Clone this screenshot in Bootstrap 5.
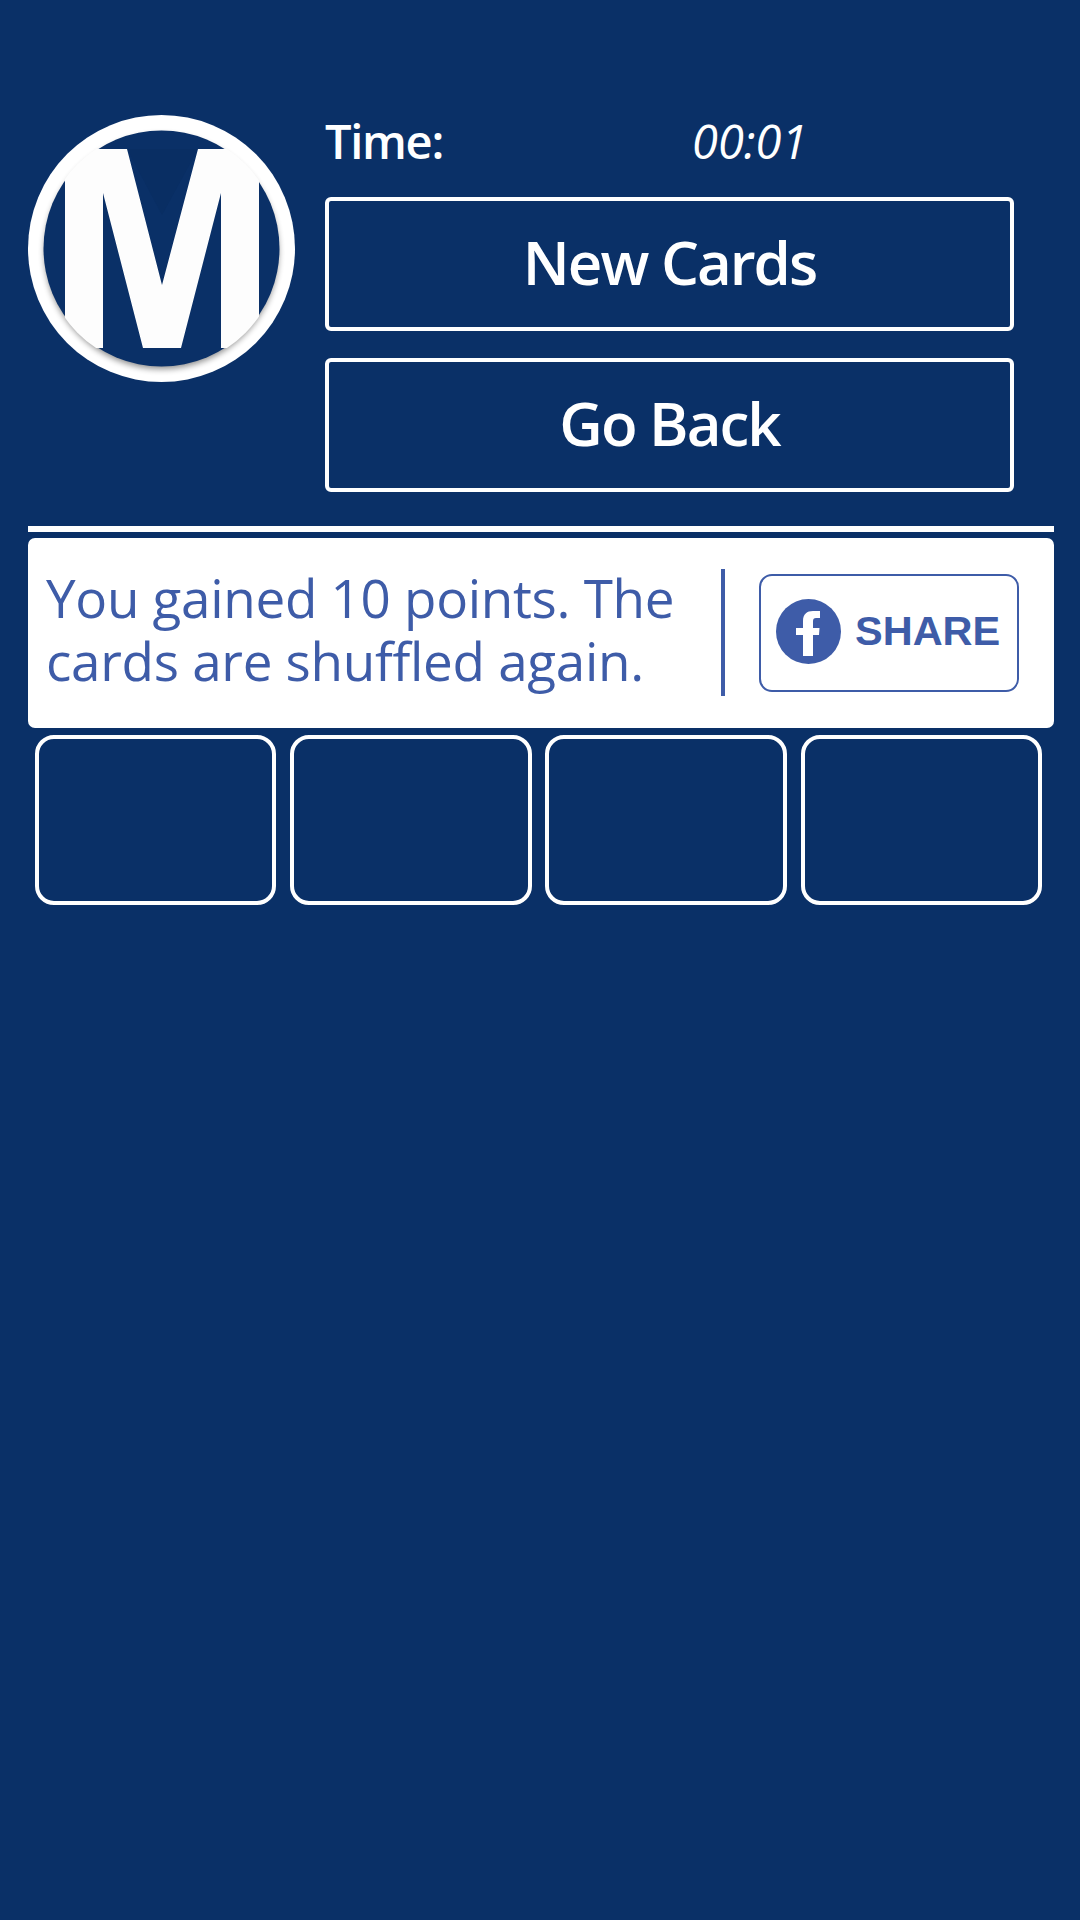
<!DOCTYPE html>
<html lang="en">
<head>
    <meta charset="UTF-8">
    <meta name="viewport" content="width=device-width, initial-scale=1.0">
    <title>Memory Cards</title>
    <link href="https://cdn.jsdelivr.net/npm/bootstrap@5.3.3/dist/css/bootstrap.min.css" rel="stylesheet">
    <style>
        body { background: #0a3067; font-family: "Open Sans", "Noto Sans", sans-serif; color: #fff; min-height: 1920px; }
        .game-page { padding: 115px 26px 0 28px; }
        .game-logo { width: 267px; height: 267px; flex: none; display: block; }
        .game-side { width: 689px; margin-left: 30px; padding-top: 1px; }
        .time-row { height: 81px; font-size: 47px; line-height: 47px; font-weight: 600; letter-spacing: -1.300px; padding-top: 2px; }
        .time-label { width: 367px; }
        .time-value { font-weight: 400; font-style: italic; letter-spacing: 0; }
        .game-btn { display: block; width: 100%; height: 134px; border: 4px solid #fff; border-radius: 6px; background: transparent; color: #fff; font-size: 60px; font-weight: 600; letter-spacing: -2px; line-height: 1; padding: 0 0 4px; }
        .game-btn:hover { background: transparent; color: #fff; border-color: #fff; }
        .game-btn + .game-btn { margin-top: 27px; }
        .game-rule { height: 6px; background: #fff; margin-top: 34px; margin-bottom: 6px; opacity: 1; border: 0; }
        .msg-box { height: 190px; border-radius: 7px; background: #fff; color: #3e5ca8; padding: 0 35px 8px 18px; }
        .msg-text { width: 675px; font-size: 53px; line-height: 63px; letter-spacing: -0.300px; }
        .msg-sep { width: 4px; height: 127px; background: #3e5ca8; flex: none; margin-top: 6px; }
        .share-box { width: 260px; height: 118px; flex: none; margin-left: 34px; margin-top: 8px; border: 2px solid #3e5ca8; border-radius: 13px; padding-left: 15px; gap: 14px; padding-bottom: 4px; }
        .share-icon { width: 65px; height: 65px; flex: none; display: block; }
        .share-word { font-family: "Liberation Sans", Arial, sans-serif; font-weight: 700; font-size: 41.500px; line-height: 1; }
        .tile-row { gap: 13.800px; padding: 7px 0 0 7px; }
        .tile-box { width: 241.400px; height: 170px; border: 4px solid #fff; border-radius: 19px; }
    </style>
</head>
<body class="m-0">
<div class="game-page">
    <!-- 上方：標誌、時間、按鈕 -->
    <div class="d-flex">
        <svg class="game-logo" viewBox="0 0 267 267">
            <defs>
                <clipPath id="outerClip"><circle cx="133.5" cy="133.5" r="133.5"/></clipPath>
                <clipPath id="innerClip"><circle cx="133.5" cy="133.5" r="119"/></clipPath>
                <filter id="ringBlur" x="-20%" y="-20%" width="140%" height="140%"><feGaussianBlur stdDeviation="3"/></filter>
            </defs>
            <circle cx="133.5" cy="133.5" r="133.5" fill="#fff"/>
            <g clip-path="url(#outerClip)">
                <circle cx="133.5" cy="137" r="117" fill="#000" opacity=".45" filter="url(#ringBlur)"/>
            </g>
            <circle cx="133.5" cy="133.5" r="118" fill="#0a3067"/>
            <g clip-path="url(#innerClip)">
                <path d="M99 34L134 100L170 34Z" fill="#082c60" opacity=".5"/>
                <path d="M37 34H99L134 170L170 34H231V233H193V78L153 233H115L75 78V233H37Z" fill="#fdfdfd"/>
            </g>
        </svg>
        <div class="game-side">
            <div class="time-row d-flex">
                <div class="time-label">Time:</div>
                <div class="time-value">00:01</div>
            </div>
            <button type="button" class="btn game-btn">New Cards</button>
            <button type="button" class="btn game-btn">Go Back</button>
        </div>
    </div>

    <hr class="game-rule">

    <!-- 訊息 -->
    <div class="msg-box d-flex align-items-center">
        <div class="msg-text">You gained 10 points. The cards are shuffled again.</div>
        <div class="msg-sep"></div>
        <div class="share-box d-flex align-items-center">
            <svg class="share-icon" viewBox="0 0 65 65">
                <circle cx="32.5" cy="32.5" r="32.5" fill="#3e5ca8"/>
                <path d="M27 57V36H20V29H27V22C27 15 31 12 37 12H44V19H40C38 19 37 20 37 22V29H43.500L43 36H37V57Z" fill="#fff"/>
            </svg>
            <span class="share-word">SHARE</span>
        </div>
    </div>

    <!-- 卡片 -->
    <div class="tile-row d-flex">
        <div class="tile-box"></div>
        <div class="tile-box"></div>
        <div class="tile-box"></div>
        <div class="tile-box"></div>
    </div>
</div>
<script src="https://cdn.jsdelivr.net/npm/bootstrap@5.3.3/dist/js/bootstrap.bundle.min.js"></script>
</body>
</html>
